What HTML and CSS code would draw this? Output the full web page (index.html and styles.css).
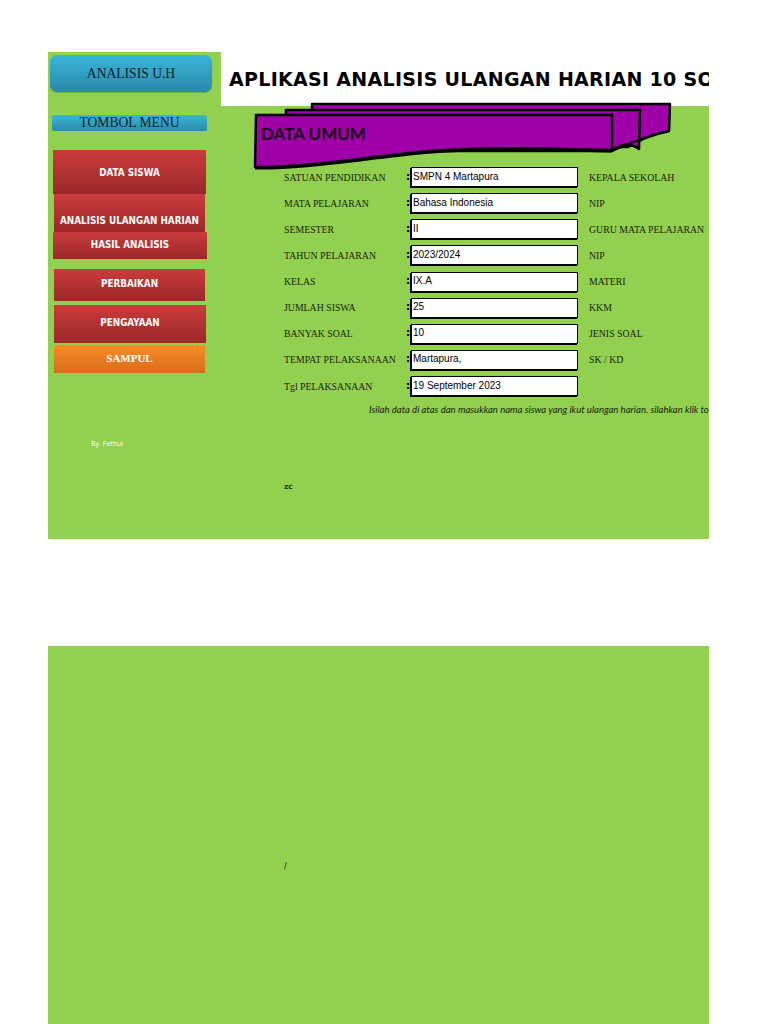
FILE: index.html
```html
<!DOCTYPE html>
<html lang="id">
<head>
<meta charset="utf-8">
<title>Aplikasi Analisis Ulangan Harian</title>
<link rel="stylesheet" href="styles.css">
</head>
<body>
<section class="sheet sheet-one">
  <aside class="sidebar">
    <div class="btn-uh">ANALISIS U.H</div>
    <div class="btn-menu">TOMBOL MENU</div>
    <div class="btn red b-siswa">DATA SISWA</div>
    <div class="btn red b-analisis">ANALISIS ULANGAN HARIAN</div>
    <div class="btn red b-hasil">HASIL ANALISIS</div>
    <div class="btn red b-perbaikan">PERBAIKAN</div>
    <div class="btn red b-pengayaan">PENGAYAAN</div>
    <div class="btn orange b-sampul">SAMPUL</div>
    <div class="byline">By. Fathul</div>
  </aside>
  <main class="main">
    <div class="titlebar"><h1 class="title">APLIKASI ANALISIS ULANGAN HARIAN 10 SOAL</h1></div>
    <div class="banner">
      <svg class="banner-svg" viewBox="250 100 425 67" width="425" height="67" aria-hidden="true">
        <path d="M312,104 L670,104 L669,131 C655,134 640,139 628,147 L312,147 Z" fill="#a000a8" stroke="#000" stroke-width="2.5" stroke-linejoin="round"/>
        <path d="M286,110 L640,110 L639,149 C630,142 620,144 612,151 L286,151 Z" fill="#a000a8" stroke="#000" stroke-width="2.5" stroke-linejoin="round"/>
        <path d="M669,131 C650,135 632,142 612,151" fill="none" stroke="#000" stroke-width="2"/>
        <path d="M256,115 L612,115 L612,150 C560,149 480,146 420,152 C360,158 300,168 255,167 Z" fill="#a000a8" stroke="#000" stroke-width="2.5" stroke-linejoin="round"/>
        <path d="M255,168 C300,169 360,159 420,153 C480,147 560,150 612,151" fill="none" stroke="#000" stroke-width="3"/>
      </svg>
      <span class="banner-text">DATA UMUM</span>
    </div>
    <div class="form">
      <div class="lbl">SATUAN PENDIDIKAN</div><div class="colon">:</div><div class="box">SMPN 4 Martapura</div><div class="rlbl">KEPALA SEKOLAH</div>
      <div class="lbl">MATA PELAJARAN</div><div class="colon">:</div><div class="box">Bahasa Indonesia</div><div class="rlbl">NIP</div>
      <div class="lbl">SEMESTER</div><div class="colon">:</div><div class="box">II</div><div class="rlbl">GURU MATA PELAJARAN</div>
      <div class="lbl">TAHUN PELAJARAN</div><div class="colon">:</div><div class="box">2023/2024</div><div class="rlbl">NIP</div>
      <div class="lbl">KELAS</div><div class="colon">:</div><div class="box">IX.A</div><div class="rlbl">MATERI</div>
      <div class="lbl">JUMLAH SISWA</div><div class="colon">:</div><div class="box">25</div><div class="rlbl">KKM</div>
      <div class="lbl">BANYAK SOAL</div><div class="colon">:</div><div class="box">10</div><div class="rlbl">JENIS SOAL</div>
      <div class="lbl">TEMPAT PELAKSANAAN</div><div class="colon">:</div><div class="box">Martapura,</div><div class="rlbl">SK / KD</div>
      <div class="lbl">Tgl PELAKSANAAN</div><div class="colon">:</div><div class="box">19 September 2023</div><div class="rlbl"></div>
    </div>
    <p class="note">Isilah data di atas dan masukkan nama siswa yang ikut ulangan harian. silahkan klik tombol menu di samping</p>
    <p class="zc">zc</p>
  </main>
</section>
<section class="sheet sheet-two">
  <p class="slash">/</p>
</section>
</body>
</html>
```
FILE: styles.css
```css
html, body {
  margin: 0;
  padding: 0;
  background: #ffffff;
}
body {
  font-family: "Liberation Serif", serif;
}
.sheet {
  width: 661px;
  margin-left: 48px;
  background: #92d050;
  overflow: hidden;
}
.sheet-one {
  margin-top: 52px;
  height: 487px;
  display: grid;
  grid-template-columns: 173px 1fr;
}
.sheet-two {
  margin-top: 107px;
  height: 378px;
}

/* sidebar */
.sidebar {
  display: flex;
  flex-direction: column;
  align-items: flex-start;
  padding-top: 3px;
}
.btn-uh {
  margin-left: 2px;
  width: 162px;
  height: 37px;
  border-radius: 7px;
  background: linear-gradient(#38b5da, #2a89a8);
  box-shadow: 0 1px 1px rgba(0,0,0,0.2);
  color: #13202a;
  font-family: "Liberation Serif", serif;
  font-size: 13.6px;
  display: flex;
  align-items: center;
  justify-content: center;
}
.btn-menu {
  margin-top: 23px;
  margin-left: 4px;
  width: 155px;
  height: 16px;
  border-radius: 2px;
  background: linear-gradient(#3ab6da, #2b8aa9);
  color: #13202a;
  font-family: "Liberation Serif", serif;
  font-size: 13.6px;
  display: flex;
  align-items: center;
  justify-content: center;
}
.btn {
  display: flex;
  align-items: center;
  justify-content: center;
  color: #ffffff;
  font-family: "DejaVu Sans Condensed", "DejaVu Sans", sans-serif;
  font-stretch: condensed;
  font-weight: bold;
  font-size: 9.8px;
  box-sizing: border-box;
}
.red {
  background: linear-gradient(#cc3b3b, #9a2829);
}
.orange {
  background: linear-gradient(#fb8d26, #d56e1b);
  font-family: "Liberation Serif", serif;
  font-weight: bold;
  font-size: 11px;
  font-stretch: normal;
}
.b-siswa { margin-top: 19px; margin-left: 5px; width: 153px; height: 44px; }
.b-analisis { margin-left: 6px; width: 151px; height: 38px; align-items: flex-end; padding-bottom: 6px; }
.b-hasil { margin-left: 5px; width: 154px; height: 27px; padding-bottom: 3px; }
.b-perbaikan { margin-top: 10px; margin-left: 6px; width: 151px; height: 32px; padding-bottom: 3px; }
.b-pengayaan { margin-top: 4px; margin-left: 6px; width: 152px; height: 38px; padding-bottom: 4px; }
.b-sampul { margin-top: 2px; margin-left: 6px; width: 151px; height: 28px; padding-bottom: 2px; }
.byline {
  margin-top: 66px;
  margin-left: 43px;
  color: #ffffff;
  font-family: "Open Sans", sans-serif;
  font-size: 7px;
}

/* main */
.main {
  min-width: 0;
  overflow: hidden;
}
.titlebar {
  height: 54px;
  background: #ffffff;
  display: flex;
  align-items: center;
  padding-left: 8px;
  overflow: hidden;
}
.title {
  margin: 0;
  white-space: nowrap;
  font-family: "DejaVu Sans", sans-serif;
  font-weight: bold;
  font-size: 19px;
  letter-spacing: 0.3px;
  color: #000000;
}
.banner {
  position: relative;
  margin-top: -6px;
  margin-left: 29px;
  height: 67px;
}
.banner-svg {
  display: block;
  overflow: visible;
}
.banner-text {
  position: absolute;
  left: 11px;
  top: 23px;
  font-family: Lato, sans-serif;
  font-weight: bold;
  font-size: 17px;
  color: #150015;
}
.form {
  margin-left: 63px;
  display: grid;
  grid-template-columns: 122px 5px 167px auto;
  grid-auto-rows: 20px;
  row-gap: 6.125px;
  white-space: nowrap;
}
.lbl, .rlbl {
  font-family: "Liberation Serif", serif;
  font-size: 9.8px;
  color: #1a240e;
  display: flex;
  align-items: center;
}
.rlbl {
  margin-left: 11px;
}
.colon {
  font-family: "DejaVu Sans", sans-serif;
  font-weight: bold;
  font-size: 10.5px;
  color: #000000;
  display: flex;
  align-items: center;
  justify-content: flex-start;
  padding-bottom: 3px;
  position: relative;
  z-index: 1;
}
.box {
  background: #ffffff;
  border: 1.5px solid #000000;
  box-shadow: -1px 1px 0 #000000;
  box-sizing: border-box;
  font-family: "Liberation Sans", sans-serif;
  font-size: 10px;
  color: #000000;
  padding-left: 1px;
  padding-bottom: 2px;
  display: flex;
  align-items: center;
}
.note {
  margin: 8px 0 0 148px;
  white-space: nowrap;
  font-family: Lato, sans-serif;
  font-style: italic;
  font-size: 9.55px;
  line-height: 12px;
  color: #1a2410;
}
.zc {
  margin: 66px 0 0 63px;
  font-family: "DejaVu Sans", sans-serif;
  font-weight: bold;
  font-size: 7.5px;
  color: #2a3a18;
}
.slash {
  margin: 216px 0 0 236px;
  font-family: "DejaVu Sans", sans-serif;
  font-size: 8px;
  color: #1a2410;
}
```
